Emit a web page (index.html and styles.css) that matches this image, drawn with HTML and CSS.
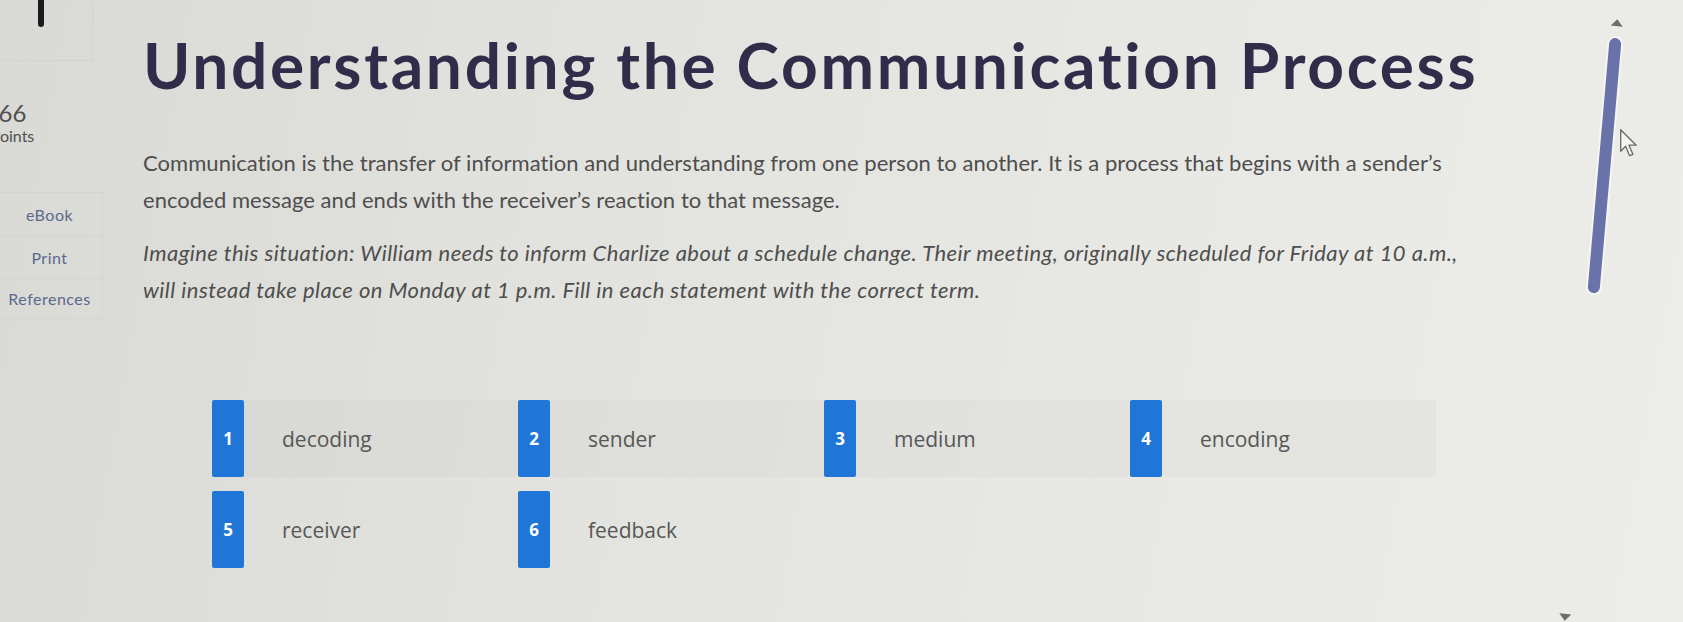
FILE: index.html
```html
<!DOCTYPE html>
<html lang="en">
<head>
<meta charset="utf-8">
<title>Understanding the Communication Process</title>
<link rel="stylesheet" href="styles.css">
</head>
<body>
<div class="page">
  <aside class="sidebar">
    <div class="top-box"><span class="top-bar"></span></div>
    <div class="score">
      <span class="score-num">66</span>
      <span class="score-label">Points</span>
    </div>
    <nav class="tools">
      <div class="tool">eBook</div>
      <div class="tool">Print</div>
      <div class="tool">References</div>
    </nav>
  </aside>

  <main class="main">
    <h1 class="title">Understanding the Communication Process</h1>
    <p class="intro">Communication is the transfer of information and understanding from one person to another. It is a process that begins with a sender’s<br>encoded message and ends with the receiver’s reaction to that message.</p>
    <p class="scenario">Imagine this situation: William needs to inform Charlize about a schedule change. Their meeting, originally scheduled for Friday at 10 a.m.,<br>will instead take place on Monday at 1 p.m. Fill in each statement with the correct term.</p>

    <div class="terms">
      <div class="term band"><span class="badge">1</span><span class="word">decoding</span></div>
      <div class="term band"><span class="badge">2</span><span class="word">sender</span></div>
      <div class="term band"><span class="badge">3</span><span class="word">medium</span></div>
      <div class="term band"><span class="badge">4</span><span class="word">encoding</span></div>
      <div class="term"><span class="badge">5</span><span class="word">receiver</span></div>
      <div class="term"><span class="badge">6</span><span class="word">feedback</span></div>
    </div>
  </main>

  <div class="scroll">
    <span class="arrow-up"></span>
    <span class="thumb"></span>
    <span class="scroll-space"></span>
    <span class="arrow-down"></span>
  </div>

  <svg class="cursor" width="20" height="31" viewBox="0 0 18 28" aria-hidden="true">
    <path d="M1.5 1.5 L1.5 21 L6 16.5 L9.5 25 L12.5 23.8 L9 15.5 L15.5 15.5 Z" fill="#f4f4f2" stroke="#6a6a6a" stroke-width="1.2" stroke-linejoin="round"/>
  </svg>
</div>
</body>
</html>
```

FILE: styles.css
```css
html, body {
  margin: 0;
  padding: 0;
}

body {
  width: 1683px;
  height: 622px;
  overflow: hidden;
  background: linear-gradient(100deg, #d9d9d5 0%, #e2e2de 35%, #e8e8e4 70%, #ececE8 100%);
  font-family: Lato, "Liberation Sans", sans-serif;
}

.page {
  position: relative;
  display: flex;
  height: 622px;
}

/* ---------- sidebar ---------- */
.sidebar {
  width: 103px;
  flex: none;
  display: flex;
  flex-direction: column;
}

.top-box {
  width: 93px;
  height: 61px;
  border-right: 1px solid #d2d2ce;
  border-bottom: 1px solid #d2d2ce;
  display: flex;
  padding-left: 38px;
  box-sizing: border-box;
}

.top-bar {
  width: 6px;
  height: 27px;
  background: #1c1c1e;
  border-radius: 0 0 3px 3px;
}

.score {
  width: 25px;
  margin-top: 39px;
  display: flex;
  flex-direction: column;
  align-items: center;
  color: #505050;
  white-space: nowrap;
}

.score-num {
  font-size: 24px;
  line-height: 26px;
}

.score-label {
  font-size: 16px;
  line-height: 20px;
}

.tools {
  margin-top: 46px;
  width: 103px;
  box-sizing: border-box;
  border-top: 1px solid #d4d4d0;
  border-right: 1px solid #d4d4d0;
  border-bottom: 1px solid #d4d4d0;
  display: flex;
  flex-direction: column;
}

.tool {
  display: flex;
  align-items: center;
  justify-content: center;
  height: 42px;
  font-size: 16px;
  letter-spacing: 0.5px;
  color: #5a6a8c;
  border-top: 1px solid #d4d4d0;
  padding-right: 3px;
}

.tool:first-child {
  border-top: none;
}

.tool:last-child {
  height: 39px;
}

/* ---------- main ---------- */
.main {
  flex: none;
  width: 1476px;
  padding-left: 40px;
  box-sizing: border-box;
}

.title {
  margin: 33px 0 0;
  font-family: Lato, "Liberation Sans", sans-serif;
  font-weight: 700;
  font-size: 64px;
  line-height: 64px;
  color: #302d4b;
  letter-spacing: 2.7px;
  white-space: nowrap;
}

.intro,
.scenario {
  margin: 0;
  font-size: 22px;
  line-height: 37px;
  color: #4e4e4e;
  white-space: nowrap;
}

.intro {
  margin-top: 47px;
  letter-spacing: 0.05px;
}

.scenario {
  margin-top: 16px;
  font-style: italic;
  letter-spacing: 0.45px;
}

/* ---------- terms ---------- */
.terms {
  margin-top: 92px;
  margin-left: 69px;
  display: grid;
  grid-template-columns: repeat(4, 306px);
  row-gap: 14px;
}

.term {
  display: flex;
  align-items: center;
  height: 77px;
}

.term.band {
  background: rgba(120, 120, 115, 0.045);
}

.badge {
  flex: none;
  width: 32px;
  height: 77px;
  border-radius: 2px;
  background: #1f76d6;
  color: #ffffff;
  font-family: "Open Sans", "Liberation Sans", sans-serif;
  font-weight: 700;
  font-size: 17px;
  display: flex;
  align-items: center;
  justify-content: center;
}

.word {
  margin-left: 38px;
  font-family: "Open Sans", "Liberation Sans", sans-serif;
  font-size: 21px;
  color: #575757;
}

/* ---------- scrollbar ---------- */
.scroll {
  flex: none;
  width: 24px;
  height: 604px;
  margin-top: 18px;
  display: flex;
  flex-direction: column;
  align-items: center;
  transform: rotate(5deg);
}

.arrow-up {
  width: 0;
  height: 0;
  border-left: 6px solid transparent;
  border-right: 6px solid transparent;
  border-bottom: 7px solid #6c6c72;
}

.thumb {
  margin-top: 12px;
  width: 12px;
  height: 256px;
  border-radius: 6px;
  background: #6a72aa;
  box-shadow: 0 0 0 2px rgba(255, 255, 255, 0.55);
}

.scroll-space {
  flex: 1;
}

.arrow-down {
  width: 0;
  height: 0;
  border-left: 6px solid transparent;
  border-right: 6px solid transparent;
  border-top: 7px solid #6c6c72;
}

.cursor {
  position: absolute;
  left: 1619px;
  top: 128px;
}
```
